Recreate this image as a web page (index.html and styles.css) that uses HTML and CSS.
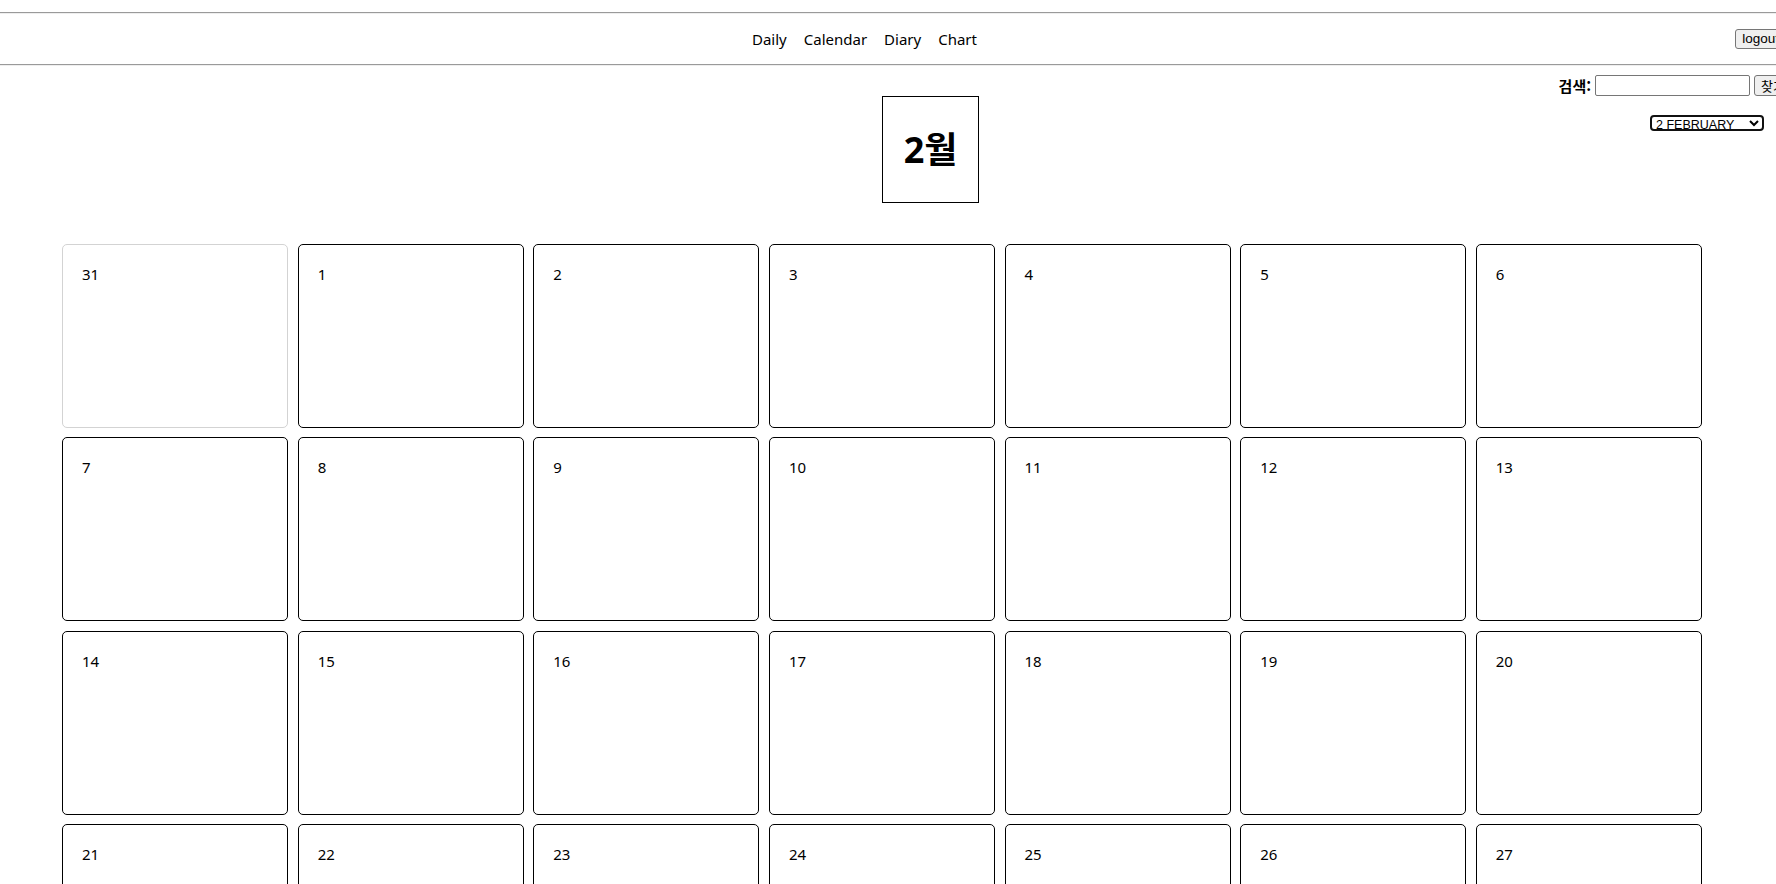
FILE: index.html
```html
<!DOCTYPE html>
<html lang="ko">
<head>
    <meta charset="UTF-8">
    <meta name="viewport" content="width=device-width, initial-scale=1.0">
    <title>Calendar</title>
    <link rel="stylesheet" href="styles.css">
</head>
<body>
    <div class="page">
        <div class="topbar">
            <ul class="nav">
                <li><a href="#">Daily</a></li>
                <li><a href="#">Calendar</a></li>
                <li><a href="#">Diary</a></li>
                <li><a href="#">Chart</a></li>
            </ul>
            <button class="btn logout">logout</button>
        </div>

        <form class="search">
            <label for="keyword">검색:</label>
            <input type="text" id="keyword">
            <button type="button" class="btn find-btn">찾기</button>
        </form>

        <div class="month-row">
            <h1 class="month-title">2월</h1>
            <select class="month-select">
                <option>1 JANUARY</option>
                <option selected>2 FEBRUARY</option>
                <option>3 MARCH</option>
            </select>
        </div>

        <div class="calendar">
            <div class="day other">31</div>
            <div class="day">1</div>
            <div class="day">2</div>
            <div class="day">3</div>
            <div class="day">4</div>
            <div class="day">5</div>
            <div class="day">6</div>
            <div class="day">7</div>
            <div class="day">8</div>
            <div class="day">9</div>
            <div class="day">10</div>
            <div class="day">11</div>
            <div class="day">12</div>
            <div class="day">13</div>
            <div class="day">14</div>
            <div class="day">15</div>
            <div class="day">16</div>
            <div class="day">17</div>
            <div class="day">18</div>
            <div class="day">19</div>
            <div class="day">20</div>
            <div class="day">21</div>
            <div class="day">22</div>
            <div class="day">23</div>
            <div class="day">24</div>
            <div class="day">25</div>
            <div class="day">26</div>
            <div class="day">27</div>
            <div class="day">28</div>
            <div class="day">29</div>
            <div class="day other">1</div>
            <div class="day other">2</div>
            <div class="day other">3</div>
            <div class="day other">4</div>
            <div class="day other">5</div>
        </div>
    </div>
</body>
</html>
```

FILE: styles.css
```css
* {
    margin: 0;
    padding: 0;
    box-sizing: border-box;
}

html {
    overflow-x: hidden;
}

body {
    font-family: "Noto Sans", "Noto Sans CJK KR", sans-serif;
    background-color: #fff;
    color: #000;
}

.page {
    margin-right: -18px;
    padding-bottom: 40px;
}

.topbar {
    margin-top: 12px;
    height: 53px;
    display: grid;
    grid-template-columns: 1fr auto 1fr;
    align-items: center;
    border-top: 1px solid #9a9a9a;
    border-bottom: 1px solid #9a9a9a;
    box-shadow: inset 0 1px 0 #eee, 0 1px 0 #eee;
}

.nav {
    grid-column: 2;
    display: flex;
    gap: 17px;
    list-style: none;
    margin-right: 65px;
    font-size: 15px;
}

.nav a {
    color: #000;
    text-decoration: none;
}

button,
input,
select {
    font-family: "Liberation Sans", Arial, sans-serif;
    font-size: 13px;
    color: #000;
}

.btn {
    height: 20px;
    padding: 0 6px;
    border: 1px solid #767676;
    border-radius: 3px;
    background-color: #efefef;
}

.logout {
    grid-column: 3;
    justify-self: end;
    margin-right: 8px;
    font-size: 13.5px;
}

.search {
    display: flex;
    justify-content: flex-end;
    align-items: center;
    gap: 4px;
    margin-top: 10px;
    padding-right: 2px;
    height: 21px;
}

.search label {
    font-family: "Noto Sans CJK KR", sans-serif;
    font-size: 15px;
    font-weight: bold;
}

.search input {
    width: 155px;
    height: 21px;
    border: 1px solid #767676;
    border-radius: 2px;
}

.find-btn {
    height: 21px;
    font-family: "Noto Sans CJK KR", sans-serif;
}

.month-row {
    display: grid;
    grid-template-columns: 1fr auto 1fr;
    align-items: start;
}

.month-title {
    grid-column: 2;
    margin-left: 67px;
    height: 107px;
    padding: 0 21px;
    border: 1px solid #000;
    font-family: "Noto Sans", "Noto Sans CJK KR", sans-serif;
    font-size: 36px;
    font-weight: bold;
    line-height: 105px;
}

.month-select {
    grid-column: 3;
    justify-self: end;
    width: 114px;
    height: 16px;
    margin-top: 19px;
    margin-right: 30px;
    border: 2px solid #111;
    border-radius: 4px;
    background-color: #fff;
    font-size: 12.5px;
}

.calendar {
    width: 1640px;
    margin: 41px 0 0 62px;
    display: grid;
    grid-template-columns: repeat(7, 1fr);
    gap: 9.3px 9.4px;
}

.day {
    height: 184px;
    padding: 19px 19px;
    border: 1px solid #000;
    border-radius: 5px;
    font-size: 15px;
}

.day.other {
    border-color: #d3d3d3;
}
```
